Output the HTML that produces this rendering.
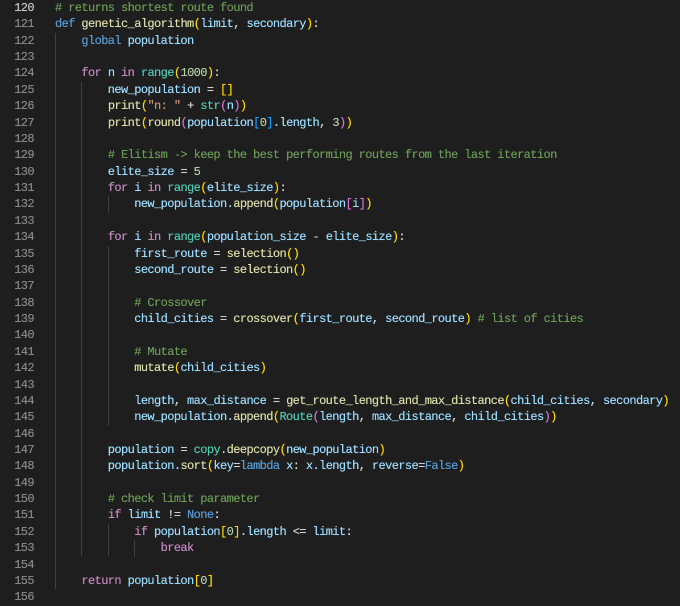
<!DOCTYPE html>
<html><head><meta charset="utf-8"><style>
body{margin:0;background:#1e1e1e;width:680px;height:599px;overflow:hidden;position:relative;font-family:"Liberation Mono",monospace;font-size:12px;letter-spacing:-0.6px}
.l{position:absolute;left:0;height:16.37px;line-height:16.37px;white-space:pre;color:#9cdcfe;text-shadow:0 0 0.4px currentColor}
.n{display:inline-block;width:34px;text-align:right;color:#858585;letter-spacing:-0.6px}
.c{position:absolute;left:55px}
.g{position:absolute;width:1px;background:#404040}
.cm{color:#6a9955}.k{color:#569cd6}.f{color:#dcdcaa}.p{color:#c586c0}.y{color:#ffd700}.m{color:#da70d6}.b{color:#179fff}.num{color:#b5cea8}.s{color:#ce9178}.t{color:#4ec9b0}.w{color:#d4d4d4}
</style></head><body>
<div class="g" style="left:55px;top:32.7px;height:556.6px"></div>
<div class="g" style="left:81px;top:81.9px;height:474px"></div>
<div class="g" style="left:108px;top:196.4px;height:16.4px"></div>
<div class="g" style="left:108px;top:245.5px;height:180px"></div>
<div class="g" style="left:108px;top:523.8px;height:32.7px"></div>
<div class="g" style="left:134px;top:540.2px;height:16.4px"></div>

<div class="l" style="top:0px"><span class="n" style="color:#c6c6c6">120</span><span class="c cm"># returns shortest route found</span></div>
<div class="l" style="top:16.37px"><span class="n">121</span><span class="c"><span class="k">def</span> <span class="f">genetic_algorithm</span><span class="y">(</span>limit<span class="w">,</span> secondary<span class="y">)</span><span class="w">:</span></span></div>
<div class="l" style="top:32.74px"><span class="n">122</span><span class="c">    <span class="k">global</span> population</span></div>
<div class="l" style="top:49.11px"><span class="n">123</span></div>
<div class="l" style="top:65.48px"><span class="n">124</span><span class="c">    <span class="p">for</span> n <span class="p">in</span> <span class="t">range</span><span class="y">(</span><span class="num">1000</span><span class="y">)</span><span class="w">:</span></span></div>
<div class="l" style="top:81.85px"><span class="n">125</span><span class="c">        new_population <span class="w">=</span> <span class="y">[]</span></span></div>
<div class="l" style="top:98.22px"><span class="n">126</span><span class="c">        <span class="f">print</span><span class="y">(</span><span class="s">"n: "</span> <span class="w">+</span> <span class="t">str</span><span class="m">(</span>n<span class="m">)</span><span class="y">)</span></span></div>
<div class="l" style="top:114.59px"><span class="n">127</span><span class="c">        <span class="f">print</span><span class="y">(</span><span class="f">round</span><span class="m">(</span>population<span class="b">[</span><span class="num">0</span><span class="b">]</span>.length<span class="w">,</span> <span class="num">3</span><span class="m">)</span><span class="y">)</span></span></div>
<div class="l" style="top:130.96px"><span class="n">128</span></div>
<div class="l" style="top:147.33px"><span class="n">129</span><span class="c">        <span class="cm"># Elitism -&gt; keep the best performing routes from the last iteration</span></span></div>
<div class="l" style="top:163.7px"><span class="n">130</span><span class="c">        elite_size <span class="w">=</span> <span class="num">5</span></span></div>
<div class="l" style="top:180.07px"><span class="n">131</span><span class="c">        <span class="p">for</span> i <span class="p">in</span> <span class="t">range</span><span class="y">(</span>elite_size<span class="y">)</span><span class="w">:</span></span></div>
<div class="l" style="top:196.44px"><span class="n">132</span><span class="c">            new_population.<span class="f">append</span><span class="y">(</span>population<span class="m">[</span>i<span class="m">]</span><span class="y">)</span></span></div>
<div class="l" style="top:212.81px"><span class="n">133</span></div>
<div class="l" style="top:229.18px"><span class="n">134</span><span class="c">        <span class="p">for</span> i <span class="p">in</span> <span class="t">range</span><span class="y">(</span>population_size <span class="w">-</span> elite_size<span class="y">)</span><span class="w">:</span></span></div>
<div class="l" style="top:245.55px"><span class="n">135</span><span class="c">            first_route <span class="w">=</span> <span class="f">selection</span><span class="y">()</span></span></div>
<div class="l" style="top:261.92px"><span class="n">136</span><span class="c">            second_route <span class="w">=</span> <span class="f">selection</span><span class="y">()</span></span></div>
<div class="l" style="top:278.29px"><span class="n">137</span></div>
<div class="l" style="top:294.66px"><span class="n">138</span><span class="c">            <span class="cm"># Crossover</span></span></div>
<div class="l" style="top:311.03px"><span class="n">139</span><span class="c">            child_cities <span class="w">=</span> <span class="f">crossover</span><span class="y">(</span>first_route<span class="w">,</span> second_route<span class="y">)</span> <span class="cm"># list of cities</span></span></div>
<div class="l" style="top:327.4px"><span class="n">140</span></div>
<div class="l" style="top:343.77px"><span class="n">141</span><span class="c">            <span class="cm"># Mutate</span></span></div>
<div class="l" style="top:360.14px"><span class="n">142</span><span class="c">            <span class="f">mutate</span><span class="y">(</span>child_cities<span class="y">)</span></span></div>
<div class="l" style="top:376.51px"><span class="n">143</span></div>
<div class="l" style="top:392.88px"><span class="n">144</span><span class="c">            length<span class="w">,</span> max_distance <span class="w">=</span> <span class="f">get_route_length_and_max_distance</span><span class="y">(</span>child_cities<span class="w">,</span> secondary<span class="y">)</span></span></div>
<div class="l" style="top:409.25px"><span class="n">145</span><span class="c">            new_population.<span class="f">append</span><span class="y">(</span><span class="t">Route</span><span class="m">(</span>length<span class="w">,</span> max_distance<span class="w">,</span> child_cities<span class="m">)</span><span class="y">)</span></span></div>
<div class="l" style="top:425.62px"><span class="n">146</span></div>
<div class="l" style="top:441.99px"><span class="n">147</span><span class="c">        population <span class="w">=</span> <span class="t">copy</span>.<span class="f">deepcopy</span><span class="y">(</span>new_population<span class="y">)</span></span></div>
<div class="l" style="top:458.36px"><span class="n">148</span><span class="c">        population.<span class="f">sort</span><span class="y">(</span>key<span class="w">=</span><span class="k">lambda</span> x<span class="w">:</span> x.length<span class="w">,</span> reverse<span class="w">=</span><span class="k">False</span><span class="y">)</span></span></div>
<div class="l" style="top:474.73px"><span class="n">149</span></div>
<div class="l" style="top:491.1px"><span class="n">150</span><span class="c">        <span class="cm"># check limit parameter</span></span></div>
<div class="l" style="top:507.47px"><span class="n">151</span><span class="c">        <span class="p">if</span> limit <span class="w">!=</span> <span class="k">None</span><span class="w">:</span></span></div>
<div class="l" style="top:523.84px"><span class="n">152</span><span class="c">            <span class="p">if</span> population<span class="y">[</span><span class="num">0</span><span class="y">]</span>.length <span class="w">&lt;=</span> limit<span class="w">:</span></span></div>
<div class="l" style="top:540.21px"><span class="n">153</span><span class="c">                <span class="p">break</span></span></div>
<div class="l" style="top:556.58px"><span class="n">154</span></div>
<div class="l" style="top:572.95px"><span class="n">155</span><span class="c">    <span class="p">return</span> population<span class="y">[</span><span class="num">0</span><span class="y">]</span></span></div>
<div class="l" style="top:589.32px"><span class="n">156</span></div>
</body></html>
